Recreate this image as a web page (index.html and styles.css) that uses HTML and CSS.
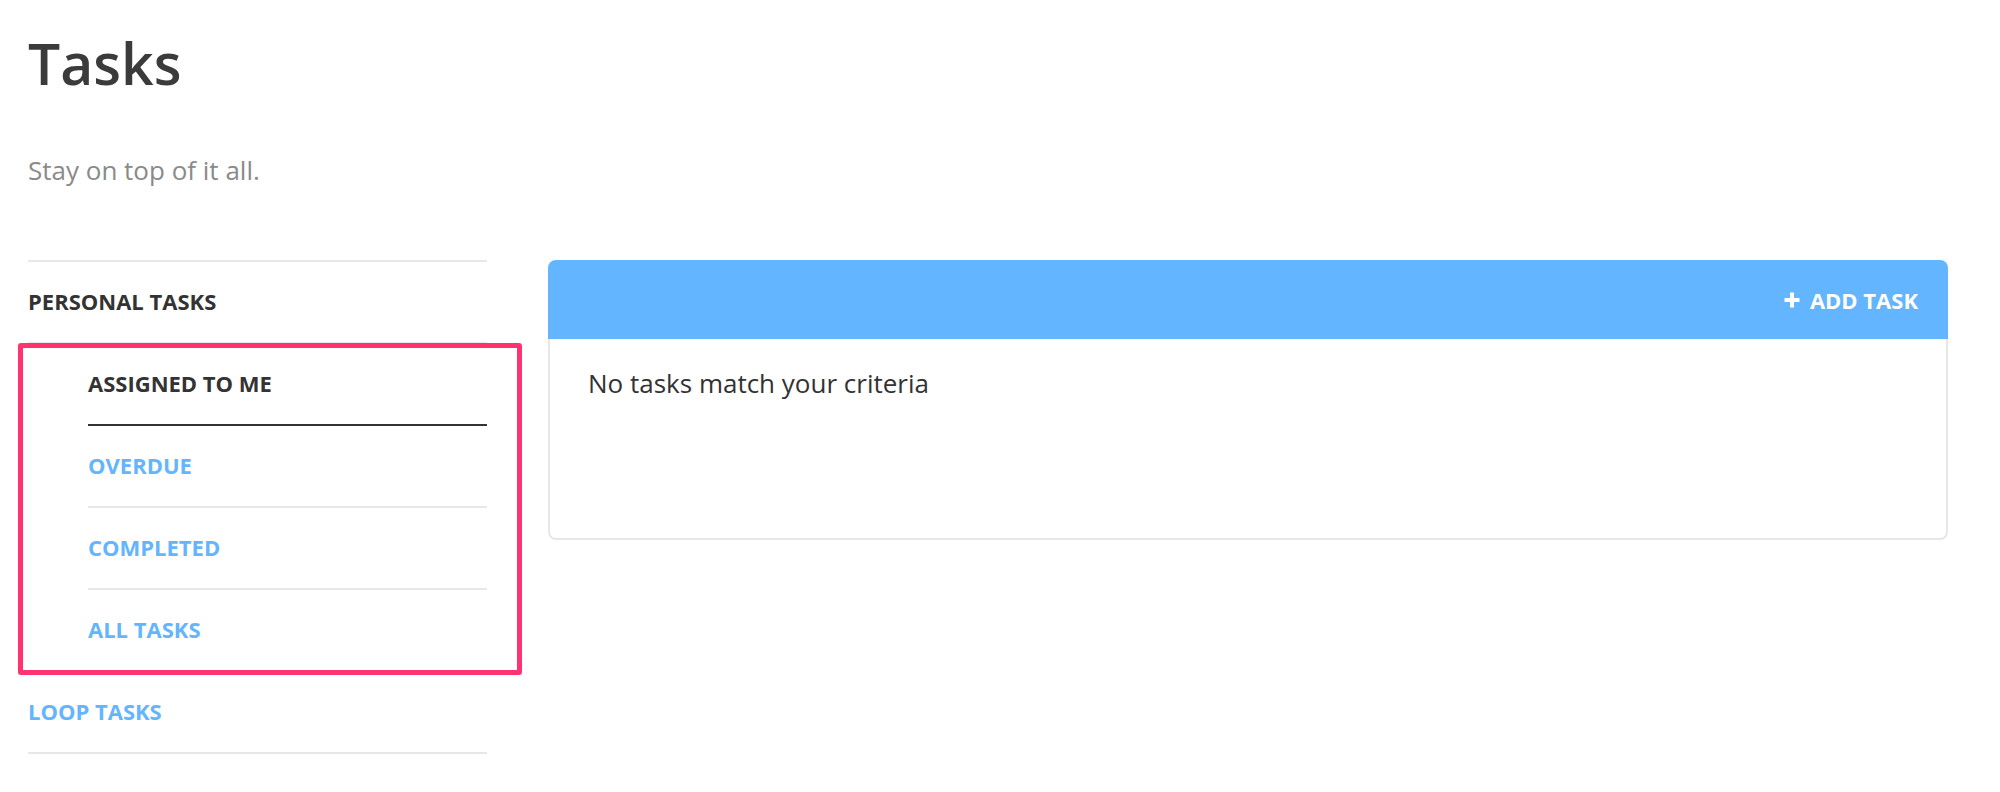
FILE: index.html
```html
<!DOCTYPE html>
<html lang="en">
<head>
<meta charset="utf-8">
<title>Tasks</title>
<link rel="stylesheet" href="styles.css">
</head>
<body>
<div class="page">
  <h1 class="title">Tasks</h1>
  <p class="subtitle">Stay on top of it all.</p>
  <div class="layout">
    <nav class="sidebar">
      <div class="nav-row nav-heading">PERSONAL TASKS</div>
      <div class="sub">
        <div class="nav-row nav-active">ASSIGNED TO ME</div>
        <div class="nav-row nav-link">OVERDUE</div>
        <div class="nav-row nav-link">COMPLETED</div>
        <div class="nav-row nav-link nav-last">ALL TASKS</div>
        <div class="highlight"></div>
      </div>
      <div class="nav-row nav-link">LOOP TASKS</div>
    </nav>
    <section class="card">
      <div class="card-header">
        <span class="add-task">
          <svg class="plus" width="16" height="16" viewBox="0 0 16 16"><path d="M8 0.5v15M0.5 8h15" stroke="#fff" stroke-width="4" fill="none"/></svg>
          ADD TASK
        </span>
      </div>
      <div class="card-body">No tasks match your criteria</div>
    </section>
  </div>
</div>
</body>
</html>
```

FILE: styles.css
```css
html, body {
  margin: 0;
  padding: 0;
  background: #fff;
}
body {
  font-family: "Open Sans", "Noto Sans", "Liberation Sans", sans-serif;
  color: #333;
}
.page {
  padding: 27px 52px 0 28px;
}
.title {
  margin: 0;
  font-size: 57px;
  font-weight: 600;
  line-height: 72px;
  color: #3b3b3b;
}
.subtitle {
  margin: 53px 0 0;
  font-size: 26px;
  line-height: 36px;
  color: #8a8a8a;
}
.layout {
  display: flex;
  align-items: flex-start;
  gap: 61px;
  margin-top: 72px;
}
.sidebar {
  flex: none;
  width: 459px;
  border-top: 2px solid #e8e6e8;
}
.nav-row {
  height: 82px;
  display: flex;
  align-items: center;
  padding-bottom: 2px;
  box-sizing: border-box;
  font-size: 22px;
  font-weight: 700;
  border-bottom: 2px solid #e8e6e8;
}
.nav-heading {
  color: #333;
}
.nav-link {
  color: #62b5fe;
}
.nav-active {
  color: #333;
  border-bottom-color: #333;
}
.nav-last {
  border-bottom-color: transparent;
}
.sub {
  position: relative;
  padding-left: 60px;
}
.highlight {
  position: absolute;
  top: -1px;
  left: -10px;
  width: 504px;
  bottom: -3px;
  box-sizing: border-box;
  border: 5px solid #ff3370;
  border-radius: 3px;
  pointer-events: none;
}
.card {
  flex: 1;
}
.card-header {
  height: 79px;
  background: #62b5fe;
  border-radius: 8px 8px 0 0;
  display: flex;
  align-items: center;
  justify-content: flex-end;
  padding-right: 30px;
}
.add-task {
  display: flex;
  align-items: center;
  gap: 10px;
  color: #fff;
  font-size: 22px;
  font-weight: 700;
}
.plus {
  display: block;
}
.card-body {
  height: 173px;
  padding: 26px 38px 0;
  border: 2px solid #e8e6e8;
  border-top: none;
  border-radius: 0 0 8px 8px;
  font-size: 26px;
  line-height: 36px;
  color: #333;
}
```
